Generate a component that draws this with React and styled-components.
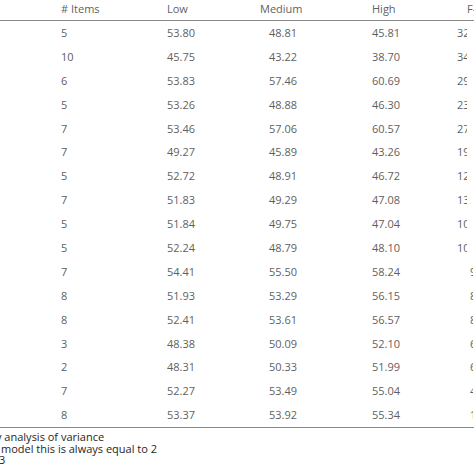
import React from "react";
import styled, { createGlobalStyle } from "styled-components";

const Global = createGlobalStyle`
  html, body { margin: 0; padding: 0; background: #fff; overflow: hidden; }
  body { width: 474px; height: 474px; font-family: "Open Sans", "Noto Sans", sans-serif; }
`;

const Page = styled.div`
  width: 474px;
  height: 474px;
  overflow: hidden;
`;

const Table = styled.div`
  display: grid;
  grid-template-columns: 61px 106px 93px 112px 85px 100px;
  width: 557px;
  font-size: 11px;
  color: #5f5f5f;
`;

const HeaderRow = styled.div`
  display: contents;
`;

const HeadCell = styled.div`
  height: 20px;
  line-height: 17px;
  padding-left: ${(p) => p.$pad || 0}px;
  border-bottom: 1.5px solid #8a8a8a;
  white-space: nowrap;
`;

const Cell = styled.div`
  height: 23.9px;
  line-height: 23px;
  padding-left: ${(p) => p.$pad || 0}px;
  white-space: nowrap;
  border-bottom: ${(p) => (p.$last ? "1.5px solid #8a8a8a" : "none")};
`;

const FValue = styled.span`
  display: inline-block;
  width: ${(p) => p.$w}px;
  overflow: hidden;
  vertical-align: top;
`;

const Notes = styled.div`
  margin-top: 3px;
  font-size: 11px;
  line-height: 11.6px;
  color: #262626;
`;

const Note = styled.div`
  margin-left: ${(p) => p.$shift || 0}px;
  white-space: nowrap;
`;

const rows = [
  ["5", "53.80", "48.81", "45.81", "32.41"],
  ["10", "45.75", "43.22", "38.70", "34.12"],
  ["6", "53.83", "57.46", "60.69", "29.87"],
  ["5", "53.26", "48.88", "46.30", "23.65"],
  ["7", "53.46", "57.06", "60.57", "27.14"],
  ["7", "49.27", "45.89", "43.26", "19.32"],
  ["5", "52.72", "48.91", "46.72", "12.45"],
  ["7", "51.83", "49.29", "47.08", "13.11"],
  ["5", "51.84", "49.75", "47.04", "10.93"],
  ["5", "52.24", "48.79", "48.10", "10.21"],
  ["7", "54.41", "55.50", "58.24", "9.81"],
  ["8", "51.93", "53.29", "56.15", "8.42"],
  ["8", "52.41", "53.61", "56.57", "8.15"],
  ["3", "48.38", "50.09", "52.10", "6.23"],
  ["2", "48.31", "50.33", "51.99", "6.01"],
  ["7", "52.27", "53.49", "55.04", "4.79"],
  ["8", "53.37", "53.92", "55.34", "1.93"],
];

export default function App() {
  return (
    <Page>
      <Global />
      <Table>
        <HeaderRow>
          <HeadCell />
          <HeadCell>#&nbsp;Items</HeadCell>
          <HeadCell>Low</HeadCell>
          <HeadCell>Medium</HeadCell>
          <HeadCell>High</HeadCell>
          <HeadCell $pad={10}>F-value</HeadCell>
        </HeaderRow>
        {rows.map((r, i) => {
          const last = i === rows.length - 1;
          const short = r[4].length < 5;
          return (
            <React.Fragment key={i}>
              <Cell $last={last} />
              <Cell $last={last}>{r[0]}</Cell>
              <Cell $last={last}>{r[1]}</Cell>
              <Cell $last={last} $pad={9}>{r[2]}</Cell>
              <Cell $last={last}>{r[3]}</Cell>
              <Cell $last={last} $pad={short ? 13 : 0}>
                <FValue $w={short ? 3 : 10}>{r[4]}</FValue>
              </Cell>
            </React.Fragment>
          );
        })}
      </Table>
      <Notes>
        <Note $shift={-4}>y analysis of variance</Note>
        <Note $shift={1}>model this is always equal to 2</Note>
        <Note $shift={-1}>3</Note>
      </Notes>
    </Page>
  );
}
